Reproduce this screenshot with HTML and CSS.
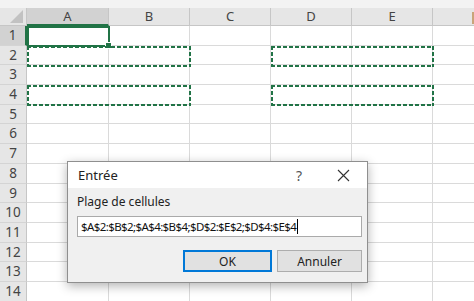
FILE: index.html
```html
<!DOCTYPE html>
<html lang="fr">
<head>
    <meta charset="UTF-8">
    <meta name="viewport" content="width=device-width, initial-scale=1.0">
    <title>Entrée</title>
    <link rel="stylesheet" href="styles.css">
</head>
<body>

    <div class="window">
        <!-- Bande au-dessus des en-têtes -->
        <div class="top-strip"></div>

        <!-- Feuille de calcul -->
        <div class="sheet">
            <div class="corner"><span class="corner-tri"></span></div>
            <div class="col-head active">A</div>
            <div class="col-head">B</div>
            <div class="col-head">C</div>
            <div class="col-head">D</div>
            <div class="col-head">E</div>
            <div class="col-head last"></div>

            <div class="row-head active">1</div><div class="cell"></div><div class="cell"></div><div class="cell"></div><div class="cell"></div><div class="cell"></div><div class="cell last"></div>
            <div class="row-head">2</div><div class="cell"></div><div class="cell"></div><div class="cell"></div><div class="cell"></div><div class="cell"></div><div class="cell last"></div>
            <div class="row-head">3</div><div class="cell"></div><div class="cell"></div><div class="cell"></div><div class="cell"></div><div class="cell"></div><div class="cell last"></div>
            <div class="row-head">4</div><div class="cell"></div><div class="cell"></div><div class="cell"></div><div class="cell"></div><div class="cell"></div><div class="cell last"></div>
            <div class="row-head">5</div><div class="cell"></div><div class="cell"></div><div class="cell"></div><div class="cell"></div><div class="cell"></div><div class="cell last"></div>
            <div class="row-head">6</div><div class="cell"></div><div class="cell"></div><div class="cell"></div><div class="cell"></div><div class="cell"></div><div class="cell last"></div>
            <div class="row-head">7</div><div class="cell"></div><div class="cell"></div><div class="cell"></div><div class="cell"></div><div class="cell"></div><div class="cell last"></div>
            <div class="row-head">8</div><div class="cell"></div><div class="cell"></div><div class="cell"></div><div class="cell"></div><div class="cell"></div><div class="cell last"></div>
            <div class="row-head">9</div><div class="cell"></div><div class="cell"></div><div class="cell"></div><div class="cell"></div><div class="cell"></div><div class="cell last"></div>
            <div class="row-head">10</div><div class="cell"></div><div class="cell"></div><div class="cell"></div><div class="cell"></div><div class="cell"></div><div class="cell last"></div>
            <div class="row-head">11</div><div class="cell"></div><div class="cell"></div><div class="cell"></div><div class="cell"></div><div class="cell"></div><div class="cell last"></div>
            <div class="row-head">12</div><div class="cell"></div><div class="cell"></div><div class="cell"></div><div class="cell"></div><div class="cell"></div><div class="cell last"></div>
            <div class="row-head">13</div><div class="cell"></div><div class="cell"></div><div class="cell"></div><div class="cell"></div><div class="cell"></div><div class="cell last"></div>
            <div class="row-head">14</div><div class="cell"></div><div class="cell"></div><div class="cell"></div><div class="cell"></div><div class="cell"></div><div class="cell last"></div>
        </div>

        <!-- Cellule active et plages copiées -->
        <div class="active-cell"><span class="handle"></span></div>
        <div class="marquee m-ab2"></div>
        <div class="marquee m-ab4"></div>
        <div class="marquee m-de2"></div>
        <div class="marquee m-de4"></div>
        <div class="edge-mark"></div>

        <!-- Boîte de dialogue -->
        <div class="dialog">
            <div class="dialog-title">
                <span class="title-text">Entrée</span>
                <span class="title-help">?</span>
                <svg class="title-close" width="13" height="13" viewBox="0 0 13 13">
                    <path d="M1 1 L12 12 M12 1 L1 12" stroke="#333" stroke-width="1.1" fill="none"/>
                </svg>
            </div>
            <div class="dialog-body">
                <div class="field-label">Plage de cellules</div>
                <div class="field-input"><span class="caret">$A$2:$B$2;$A$4:$B$4;$D$2:$E$2;$D$4:$E$4</span></div>
                <div class="dialog-buttons">
                    <button class="btn btn-default">OK</button>
                    <button class="btn">Annuler</button>
                </div>
            </div>
        </div>
    </div>

</body>
</html>
```

FILE: styles.css
```css
/* Fenêtre */
body {
    margin: 0;
    background: #ffffff;
    font-family: "Noto Sans", "Open Sans", sans-serif;
    overflow: hidden;
}

.window {
    position: relative;
    width: 474px;
    height: 301px;
    overflow: hidden;
}

.top-strip {
    height: 8px;
    background: #f3f3f3;
}

/* Grille */
.sheet {
    display: grid;
    grid-template-columns: 27px 82px 81px 81px 81px 81px 41px;
    grid-template-rows: 18px repeat(14, 19.7px);
}

.corner {
    position: relative;
    background: #e6e6e6;
    border-right: 1px solid #c6c6c6;
    border-bottom: 1px solid #c6c6c6;
}

.corner-tri {
    position: absolute;
    right: 3px;
    bottom: 2px;
    width: 0;
    height: 0;
    border-left: 13px solid transparent;
    border-bottom: 13px solid #c2c2c2;
}

.col-head {
    background: #e6e6e6;
    border-right: 1px solid #c6c6c6;
    border-bottom: 1px solid #c6c6c6;
    color: #444;
    font-size: 13px;
    line-height: 17px;
    text-align: center;
}

.col-head.active {
    background: #d2d2d2;
    border-bottom: 2px solid #217346;
    line-height: 16px;
}

.col-head.last {
    border-right: none;
}

.row-head {
    background: #e6e6e6;
    border-right: 1px solid #c6c6c6;
    border-bottom: 1px solid #d4d4d4;
    color: #444;
    font-size: 13.5px;
    line-height: 18px;
    text-align: center;
}

.row-head.active {
    background: #d2d2d2;
    border-right: 2px solid #217346;
}

.cell {
    border-right: 1px solid #dadada;
    border-bottom: 1px solid #dadada;
}

.cell.last {
    border-right: none;
}

/* Sélections */
.active-cell {
    position: absolute;
    left: 27px;
    top: 26px;
    width: 83px;
    height: 21px;
    box-sizing: border-box;
    border: 2px solid #217346;
}

.handle {
    position: absolute;
    right: -4px;
    bottom: -4px;
    width: 5px;
    height: 5px;
    background: #217346;
    border: 1px solid #fff;
}

/* Bordure pointillée (copie) */
.marquee {
    position: absolute;
    background:
        repeating-linear-gradient(90deg, #217346 0 4px, transparent 4px 6px) top / 100% 2px no-repeat,
        repeating-linear-gradient(90deg, #217346 0 4px, transparent 4px 6px) bottom / 100% 2px no-repeat,
        repeating-linear-gradient(180deg, #217346 0 4px, transparent 4px 6px) left / 2px 100% no-repeat,
        repeating-linear-gradient(180deg, #217346 0 4px, transparent 4px 6px) right / 2px 100% no-repeat;
}

.m-ab2 { left: 27px; top: 46px; width: 164px; height: 21px; }
.m-ab4 { left: 27px; top: 85px; width: 164px; height: 21px; }
.m-de2 { left: 271px; top: 46px; width: 163px; height: 21px; }
.m-de4 { left: 271px; top: 85px; width: 163px; height: 21px; }

.edge-mark {
    position: absolute;
    right: 0;
    top: 12px;
    width: 2px;
    height: 12px;
    background: #c9a47a;
}

/* Boîte de dialogue */
.dialog {
    position: absolute;
    left: 67px;
    top: 161px;
    width: 301px;
    height: 122px;
    box-sizing: border-box;
    border: 1px solid #8f8f8f;
    background: #f0f0f0;
    box-shadow: 0 3px 10px rgba(0, 0, 0, 0.3);
    display: flex;
    flex-direction: column;
}

.dialog-title {
    height: 26px;
    background: #ffffff;
    display: flex;
    align-items: center;
    padding: 0 0 0 10px;
    color: #222;
}

.title-text {
    font-size: 13px;
    flex: 1;
}

.title-help {
    font-size: 14px;
    color: #555;
    margin-right: 35px;
}

.title-close {
    margin-right: 17px;
}

.dialog-body {
    flex: 1;
    padding: 6px 5px 0 9px;
}

.field-label {
    font-size: 12px;
    color: #222;
    line-height: 16px;
}

.field-input {
    margin-top: 6px;
    height: 21px;
    box-sizing: border-box;
    background: #fff;
    border: 1px solid #aaaaaa;
    font-size: 11.5px;
    letter-spacing: -0.6px;
    line-height: 19px;
    padding-left: 3px;
    color: #111;
    white-space: nowrap;
}

.caret {
    border-right: 1px solid #000;
    padding-right: 1px;
}

.dialog-buttons {
    display: flex;
    justify-content: flex-end;
    gap: 5px;
    margin-top: 13px;
}

.btn {
    height: 22px;
    width: 85px;
    box-sizing: border-box;
    background: #e1e1e1;
    border: 1px solid #adadad;
    font-family: "Noto Sans", "Open Sans", sans-serif;
    font-size: 12px;
    color: #222;
    padding: 0;
}

.btn-default {
    width: 89px;
    border: 2px solid #0078d7;
}
```
